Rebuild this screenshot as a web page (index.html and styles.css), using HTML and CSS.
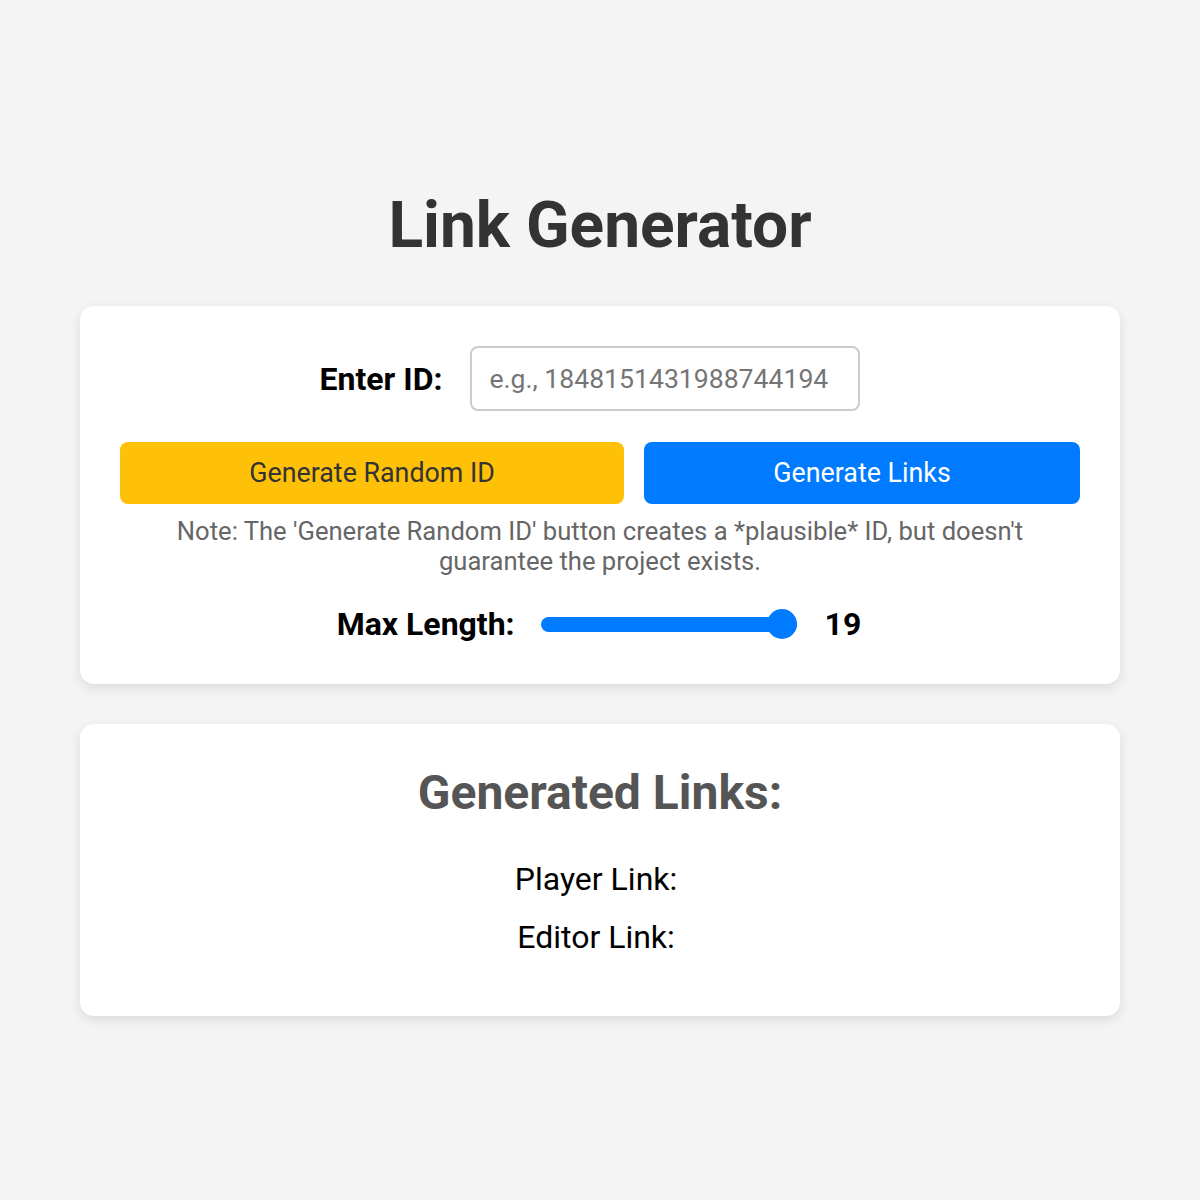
FILE: index.html
```html
<!DOCTYPE html>
<html lang="en">
<head>
  <meta charset="UTF-8">
  <meta name="viewport" content="width=device-width, initial-scale=1.0">
  <title>Link Generator</title>
  <link rel="stylesheet" href="styles.css">
</head>
<body>
  <div class="container">
    <h1>Link Generator</h1>

    <div class="card">
      <div class="id-row">
        <label for="projectId">Enter ID:</label>
        <input type="text" id="projectId" placeholder="e.g., 1848151431988744194">
      </div>

      <div class="button-row">
        <button class="btn-random" id="randomBtn">Generate Random ID</button>
        <button class="btn-generate" id="generateBtn">Generate Links</button>
      </div>

      <p class="note">Note: The 'Generate Random ID' button creates a *plausible* ID, but doesn't guarantee the project exists.</p>

      <div class="length-row">
        <label for="maxLength">Max Length:</label>
        <input type="range" id="maxLength" min="1" max="19" value="19">
        <span class="length-value" id="lengthValue">19</span>
      </div>
    </div>

    <div class="card results">
      <h2>Generated Links:</h2>
      <p class="link-line">Player Link: <a id="playerLink" href="#"></a></p>
      <p class="link-line">Editor Link: <a id="editorLink" href="#"></a></p>
    </div>
  </div>
</body>
</html>
```

FILE: styles.css
```css
body {
  font-family: Roboto, "Noto Sans", Arial, sans-serif;
  background-color: #f4f4f4;
  margin: 0;
  padding: 188px 0 40px;
  color: #000;
}
.container {
  width: 1040px;
  margin: 0 auto;
}
h1 {
  font-size: 64px;
  color: #333;
  text-align: center;
  margin: 0 0 43px;
}
.card {
  background: #fff;
  border-radius: 14px;
  padding: 40px;
  box-shadow: 0 4px 12px rgba(0, 0, 0, 0.1);
  margin-bottom: 40px;
}
.id-row {
  display: flex;
  justify-content: center;
  align-items: center;
  gap: 28px;
  padding-right: 20px;
}
.id-row label,
.length-row label {
  font-weight: bold;
  font-size: 32px;
}
.id-row input {
  width: 390px;
  height: 65px;
  box-sizing: border-box;
  padding: 0 17px;
  border: 2px solid #ccc;
  border-radius: 8px;
  font-family: inherit;
  font-size: 26.6px;
  color: #333;
}
.id-row input::placeholder {
  color: #757575;
}
.button-row {
  display: flex;
  gap: 20px;
  margin-top: 31px;
}
.button-row button {
  flex: 1 1 auto;
  height: 62px;
  border: none;
  border-radius: 8px;
  font-family: inherit;
  font-size: 26.8px;
  cursor: pointer;
}
.btn-random {
  background-color: #ffc107;
  color: #333;
}
.btn-generate {
  background-color: #007bff;
  color: #fff;
}
.note {
  font-size: 25.6px;
  line-height: 30px;
  color: #666;
  text-align: center;
  margin: 12px 0 28px;
  padding: 0 4px;
}
.length-row {
  display: flex;
  justify-content: center;
  align-items: center;
  gap: 26px;
  height: 40px;
  padding-right: 2px;
}
.length-row input[type="range"] {
  -webkit-appearance: none;
  appearance: none;
  width: 256px;
  height: 15px;
  margin: 0;
  border-radius: 8px;
  background: #007bff;
}
.length-row input[type="range"]::-webkit-slider-thumb {
  -webkit-appearance: none;
  width: 30px;
  height: 30px;
  border-radius: 50%;
  background: #007bff;
  cursor: pointer;
}
.length-value {
  font-weight: bold;
  font-size: 32px;
  margin-left: 2px;
}
.results {
  text-align: center;
}
.results h2 {
  font-size: 48px;
  color: #555;
  margin: 0 0 39px;
}
.link-line {
  font-size: 32px;
  margin: 0 0 20px;
}
.link-line a {
  display: inline-block;
  color: #007bff;
  word-break: break-all;
}
```
